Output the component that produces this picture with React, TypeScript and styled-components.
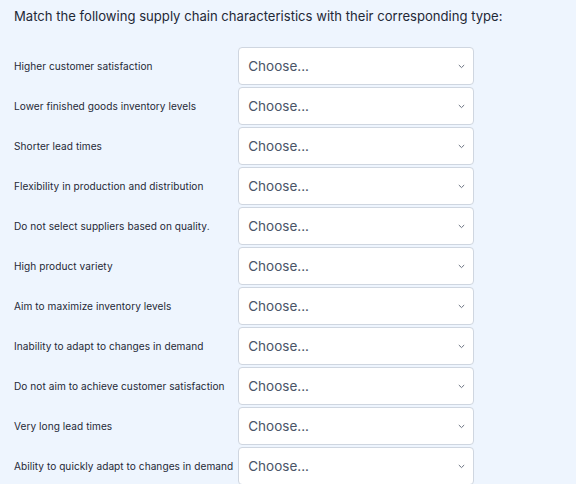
import styled, { createGlobalStyle } from "styled-components";

const GlobalStyle = createGlobalStyle`
  html, body {
    margin: 0;
    background: #eef5fe;
  }
  body {
    font-family: Inter, "Liberation Sans", sans-serif;
  }
`;

const Page = styled.div`
  padding: 7px 14px 0 14px;
`;

const Title = styled.h1`
  margin: 0 0 22px 0;
  font-size: 13.1px;
  font-weight: 400;
  color: #1f2937;
  line-height: 18px;
`;

const Grid = styled.div`
  display: grid;
  grid-template-columns: max-content 236px;
  column-gap: 5px;
  row-gap: 2px;
  align-items: center;
`;

const Label = styled.span`
  font-size: 10.1px;
  color: #1f2937;
  line-height: 14px;
  letter-spacing: 0.05px;
`;

const SelectBox = styled.div`
  height: 38px;
  box-sizing: border-box;
  background: #ffffff;
  border: 1px solid #cfd6e0;
  border-radius: 4px;
  display: flex;
  align-items: center;
  justify-content: space-between;
  padding: 0 8px 0 9px;
  font-size: 13.5px;
  color: #4a5568;
`;

const Chevron = () => (
  <svg width="7" height="5" viewBox="0 0 7 5" fill="none">
    <path d="M0.8 1 L3.5 3.6 L6.2 1" stroke="#6b7280" strokeWidth="1" />
  </svg>
);

const items = [
  "Higher customer satisfaction",
  "Lower finished goods inventory levels",
  "Shorter lead times",
  "Flexibility in production and distribution",
  "Do not select suppliers based on quality.",
  "High product variety",
  "Aim to maximize inventory levels",
  "Inability to adapt to changes in demand",
  "Do not aim to achieve customer satisfaction",
  "Very long lead times",
  "Ability to quickly adapt to changes in demand",
];

export default function App() {
  return (
    <Page>
      <GlobalStyle />
      <Title>Match the following supply chain characteristics with their corresponding type:</Title>
      <Grid>
        {items.map((text) => (
          <>
            <Label key={text}>{text}</Label>
            <SelectBox key={text + "-s"}>
              <span>Choose...</span>
              <Chevron />
            </SelectBox>
          </>
        ))}
      </Grid>
    </Page>
  );
}
